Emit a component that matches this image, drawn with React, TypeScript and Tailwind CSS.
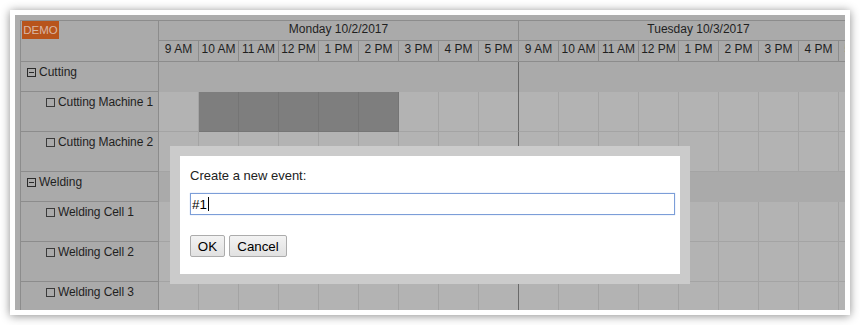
import React from "react";

const hours = ["9 AM", "10 AM", "11 AM", "12 PM", "1 PM", "2 PM", "3 PM", "4 PM", "5 PM"];
const days = ["Monday 10/2/2017", "Tuesday 10/3/2017"];
const columns = [...hours, ...hours];

type Row = { name: string; group?: boolean; selected?: number[] };

const rows: Row[] = [
  { name: "Cutting", group: true },
  { name: "Cutting Machine 1", selected: [1, 2, 3, 4, 5] },
  { name: "Cutting Machine 2" },
  { name: "Welding", group: true },
  { name: "Welding Cell 1" },
  { name: "Welding Cell 2" },
  { name: "Welding Cell 3" },
];

const MinusBox = () => (
  <span className="relative w-[9px] h-[9px] border border-[#2b2b2b] mr-[3px] shrink-0">
    <span className="absolute left-[1px] top-[3px] w-[5px] h-px bg-[#2b2b2b]" />
  </span>
);

const CheckBox = () => (
  <span className="w-[9px] h-[9px] border border-[#3a3a3a] mr-[3px] shrink-0" />
);

const GridRow = ({ row }: { row: Row }) => {
  if (row.group) {
    return (
      <div className="flex h-[30px]">
        <div className="w-[138px] h-full border-r border-b border-[#8c8c8c] bg-[#aaaaaa] pl-[6px] pt-[3px]">
          <div className="flex items-center h-[14px] leading-[14px]">
            <MinusBox />
            <span>{row.name}</span>
          </div>
        </div>
        {columns.map((_, i) => (
          <div
            key={i}
            className={
              i === 8
                ? "w-[40px] h-full shrink-0 bg-[#aaaaaa] border-r border-[#6a6a6a]"
                : "w-[40px] h-full shrink-0 bg-[#aaaaaa] border-r border-[#aaaaaa]"
            }
          />
        ))}
      </div>
    );
  }

  return (
    <div className="flex h-[40px]">
      <div className="w-[138px] h-full border-r border-b border-[#8c8c8c] bg-[#aaaaaa] pl-[25px] pt-[3px]">
        <div className="flex items-center h-[14px] leading-[14px] tracking-[-0.1px]">
          <CheckBox />
          <span>{row.name}</span>
        </div>
      </div>
      {columns.map((_, i) => {
        const sel = row.selected?.includes(i);
        let cls = "w-[40px] h-full shrink-0 border-r border-b ";
        if (sel) cls += "bg-[#7e7e7e] border-[#757575]";
        else if (i === 8) cls += "bg-[#b3b3b3] border-b-[#a4a4a4] border-r-[#6a6a6a]";
        else cls += "bg-[#b3b3b3] border-[#a4a4a4]";
        return <div key={i} className={cls} />;
      })}
    </div>
  );
};

const Scheduler = () => (
  <div className="w-max border-t border-l border-[#8c8c8c] text-[12px] text-[#1f1f1f]">
    {/* header */}
    <div className="flex border-b border-[#8c8c8c] bg-[#aaaaaa]">
      <div className="w-[138px] h-[40px] border-r border-[#8c8c8c]">
        <div className="ml-px w-[37px] h-[18px] bg-[#b8541b] text-[#d8b7a6] text-[11.5px] leading-[18px] text-center">
          DEMO
        </div>
      </div>
      <div className="flex flex-col">
        <div className="flex h-[20px] border-b border-[#8c8c8c]">
          {days.map((d) => (
            <div
              key={d}
              className="w-[360px] shrink-0 border-r border-[#8c8c8c] text-center pt-px leading-[14px]"
            >
              {d}
            </div>
          ))}
        </div>
        <div className="flex h-[20px]">
          {columns.map((h, i) => (
            <div
              key={i}
              className="w-[40px] shrink-0 border-r border-[#8c8c8c] text-center pt-px leading-[14px] whitespace-nowrap"
            >
              {h}
            </div>
          ))}
        </div>
      </div>
    </div>
    {rows.map((r) => (
      <GridRow key={r.name} row={r} />
    ))}
  </div>
);

const Dialog = () => (
  <div className="absolute left-[155px] top-[131px] w-[520px] h-[138px] bg-[#cbcbcb] p-[10px]">
    <div className="h-full bg-white pl-[10px] pt-[12px] text-[13px] leading-[15px] text-[#222]">
      <div>Create a new event:</div>
      <div className="mt-[10px] w-[485px] h-[22px] border border-[#7c9ed8] shadow-[0_0_1px_#a9c1ee] flex items-center pl-px text-[13.33px] text-black">
        <span>#1</span>
        <span className="w-px h-[14px] bg-black ml-px" />
      </div>
      <div className="mt-[20px] flex gap-[4px]">
        <button className="h-[22px] w-[35px] border border-[#acacac] rounded-[2px] bg-linear-to-b from-[#f3f3f3] to-[#e1e1e1] text-[13.33px] text-black">
          OK
        </button>
        <button className="h-[22px] w-[58px] border border-[#acacac] rounded-[2px] bg-linear-to-b from-[#f3f3f3] to-[#e1e1e1] text-[13.33px] text-black">
          Cancel
        </button>
      </div>
    </div>
  </div>
);

export default function App() {
  return (
    <div className="w-[860px] h-[325px] bg-white pt-[10px] pl-[10px] font-['Liberation_Sans',Arial,sans-serif]">
      <div className="w-[840px] h-[305px] bg-white p-[5px] shadow-[0_1px_9px_rgba(0,0,0,0.45)]">
        <div className="relative w-[830px] h-[295px] overflow-hidden bg-[#adadad] pt-[5px] pl-[5px]">
          <Scheduler />
          <Dialog />
        </div>
      </div>
    </div>
  );
}
